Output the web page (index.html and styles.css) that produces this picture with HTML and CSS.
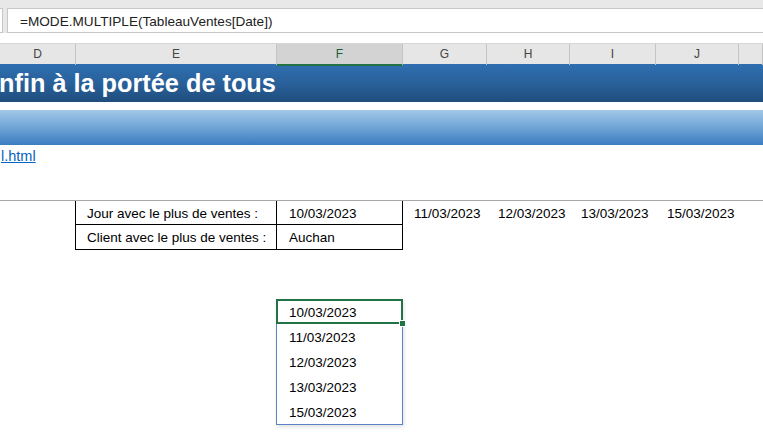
FILE: index.html
```html
<!DOCTYPE html>
<html lang="fr">
<head>
    <meta charset="UTF-8">
    <meta name="viewport" content="width=device-width, initial-scale=1.0">
    <title>MODE.MULTIPLE</title>
    <link rel="stylesheet" href="styles.css">
</head>
<body>
    <div class="ribbon-edge"></div>
    <div class="formula-row">
        <div class="namebox"></div>
        <div class="formula">=MODE.MULTIPLE(TableauVentes[Date])</div>
    </div>
    <div class="col-heads">
        <div class="head">D</div>
        <div class="head">E</div>
        <div class="head selected">F</div>
        <div class="head">G</div>
        <div class="head">H</div>
        <div class="head">I</div>
        <div class="head">J</div>
        <div class="head"></div>
    </div>
    <div class="sheet">
        <div class="title-band">nfin à la portée de tous</div>
        <div class="sub-band"></div>
        <div class="link-row"><a href="#">l.html</a></div>
        <div class="grid">
            <div class="cell box first">Jour avec le plus de ventes :</div>
            <div class="cell box">10/03/2023</div>
            <div class="cell">11/03/2023</div>
            <div class="cell">12/03/2023</div>
            <div class="cell">13/03/2023</div>
            <div class="cell">15/03/2023</div>
            <div class="cell box first row2">Client avec le plus de ventes :</div>
            <div class="cell box row2">Auchan</div>
            <div class="spill">
                <div class="cell active">10/03/2023</div>
                <div class="cell">11/03/2023</div>
                <div class="cell">12/03/2023</div>
                <div class="cell">13/03/2023</div>
                <div class="cell">15/03/2023</div>
            </div>
        </div>
    </div>
</body>
</html>
```

FILE: styles.css
```css
body {
    margin: 0;
    width: 763px;
    height: 446px;
    overflow: hidden;
    background: #fff;
    font-family: "Liberation Sans", Arial, sans-serif;
    color: #000;
}

.ribbon-edge {
    height: 8px;
    background: #e8e8e8;
}

.formula-row {
    display: flex;
    height: 25px;
    background: #e8e8e8;
    gap: 4px;
}
.namebox {
    width: 3px;
    background: #fff;
    border: 1px solid #c6c6c6;
    border-left: none;
    box-sizing: border-box;
}
.formula {
    flex: 1;
    background: #fff;
    border: 1px solid #c6c6c6;
    border-right: none;
    box-sizing: border-box;
    padding: 2px 0 0 12px;
    font-size: 13.6px;
    line-height: 22px;
    color: #222;
}

.col-heads {
    display: grid;
    grid-template-columns: 76px 201px 126px 84px 83px 86px 83px 1fr;
    height: 21px;
    margin-top: 10px;
    background: #e6e6e6;
    border-top: 1px solid #d6d6d6;
    box-sizing: border-box;
    padding-bottom: 1px;
}
.head {
    border-right: 1px solid #c4c4c4;
    text-align: center;
    font-size: 12px;
    line-height: 20px;
    color: #444;
}
.head.selected {
    background: #d3d3d3;
    color: #1d5c38;
    border-bottom: 2px solid #217346;
    margin-bottom: -1px;
}

.title-band {
    height: 38px;
    line-height: 38px;
    background: linear-gradient(#2f6fb1, #285f98 55%, #1f4d7c);
    color: #fff;
    font-weight: bold;
    font-size: 25.3px;
    white-space: nowrap;
    text-indent: -1px;
}
.sub-band {
    height: 35px;
    margin-top: 8px;
    background: linear-gradient(#a2c7e8, #75a8d8 45%, #3b7cc0);
}
.link-row {
    height: 55px;
    font-size: 14.5px;
    line-height: 22px;
}
.link-row a {
    color: #0563c1;
    margin-left: 1px;
}

.grid {
    display: grid;
    grid-template-columns: 76px 201px 126px 84px 83px 86px 83px 1fr;
    grid-template-rows: 24px repeat(8, 25px);
    border-top: 1px solid #a6a6a6;
    font-size: 13.5px;
}
.cell {
    padding: 1px 0 0 11px;
    line-height: 24px;
    white-space: nowrap;
}
.grid > .cell:nth-child(1) { grid-column: 2; }
.grid > .row2 { grid-row: 2; }
.grid > .row2.first { grid-column: 2; }
.grid > .row2:not(.first) { grid-column: 3; }
.box {
    border-right: 1px solid #000;
    border-bottom: 1px solid #000;
}
.box.first {
    border-left: 1px solid #000;
    margin-left: -1px;
}
.box:not(.first) {
    padding-left: 12px;
}

.spill {
    grid-column: 3;
    grid-row: 5 / span 5;
    display: flex;
    flex-direction: column;
    border: 1px solid #5a80c6;
    margin: -1px 0 0 -1px;
    box-shadow: 1px 2px 4px rgba(0, 0, 0, 0.12);
    background: #fff;
}
.spill .cell {
    height: 25px;
    box-sizing: border-box;
    padding: 2px 0 0 12px;
    line-height: 23px;
}
.spill .active {
    position: relative;
    margin: -1px -1px 0 -1px;
    padding-left: 13px;
    box-shadow: inset 0 0 0 2px #217346;
}
.spill .active::after {
    content: "";
    position: absolute;
    right: -3px;
    bottom: -3px;
    width: 5px;
    height: 5px;
    background: #217346;
    border: 1px solid #fff;
}
```
